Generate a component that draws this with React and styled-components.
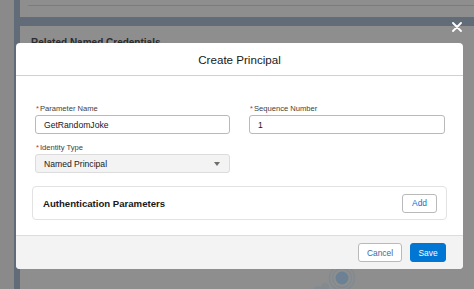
import React from "react";
import styled, { createGlobalStyle } from "styled-components";

const Global = createGlobalStyle`
  html, body { margin: 0; padding: 0; }
  body {
    width: 474px; height: 289px; overflow: hidden;
    background: #8b8b8b;
    font-family: "Liberation Sans", Arial, sans-serif;
  }
  #root { width: 474px; height: 289px; }
`;

const Page = styled.div`
  position: relative;
  width: 474px;
  height: 289px;
  display: flex;
  overflow: hidden;
`;

const SideGray = styled.div`
  width: 14px;
  background: #8a8a8a;
`;

const Main = styled.div`
  flex: 1;
  background: #626c79;
  padding-left: 6px;
  display: flex;
  flex-direction: column;
  gap: 9px;
`;

const TopCard = styled.div`
  height: 17px;
  background: #8e8e8e;
  padding: 5px 0 0 8px;
  box-sizing: border-box;
`;

const CardLine = styled.div`
  height: 1px;
  background: #7c7c7c;
`;

const BottomCard = styled.div`
  position: relative;
  flex: 1;
  background: #8e8e8e;
  padding: 11px 0 0 11px;
`;

const CardTitle = styled.div`
  font-size: 10px;
  font-weight: 700;
  color: #2c2c2c;
  line-height: 12px;
`;

const Decoration = styled.svg`
  position: absolute;
  left: 272px;
  top: 237px;
`;

const Close = styled.button`
  position: absolute;
  left: 451px;
  top: 21px;
  width: 12px;
  height: 12px;
  padding: 0;
  border: 0;
  background: transparent;
  display: flex;
  align-items: center;
  justify-content: center;
`;

const Modal = styled.div`
  position: absolute;
  left: 16px;
  top: 43px;
  width: 447px;
  height: 226px;
  background: #fff;
  border-radius: 4px;
  display: flex;
  flex-direction: column;
  overflow: hidden;
`;

const Header = styled.div`
  height: 33px;
  border-bottom: 1px solid #d0d0d0;
  display: flex;
  align-items: center;
  justify-content: center;
  box-sizing: border-box;
`;

const Title = styled.h2`
  margin: 0;
  font-size: 11.6px;
  font-weight: 400;
  color: #181818;
`;

const Body = styled.div`
  flex: 1;
  padding: 28px 16px 0 16px;
  display: flex;
  flex-direction: column;
`;

const Grid = styled.div`
  display: grid;
  grid-template-columns: 195px 196px;
  column-gap: 19px;
  row-gap: 9px;
  padding: 0 3px;
  align-items: start;
`;

const Field = styled.div`
  display: flex;
  flex-direction: column;
  gap: 2px;
`;

const Label = styled.label`
  font-size: 7.6px;
  line-height: 9px;
  color: #3e3e3c;
  padding-left: 1px;
`;

const Req = styled.span`
  color: #c23934;
  margin-right: 1px;
`;

const Input = styled.div`
  height: 19px;
  box-sizing: border-box;
  border: 1px solid ${(p) => (p.$select ? "#dcdcdc" : "#b9b9b9")};
  border-radius: 3px;
  background: ${(p) => (p.$select ? "#f3f3f3" : "#fff")};
  padding: 0 8px 0 8px;
  display: flex;
  align-items: center;
  justify-content: space-between;
  font-size: 8.6px;
  color: #181818;
`;

const Caret = styled.span`
  width: 0;
  height: 0;
  border-left: 3px solid transparent;
  border-right: 3px solid transparent;
  border-top: 4px solid #706e6b;
  margin-right: 1px;
`;

const AuthBox = styled.div`
  margin-top: 13px;
  height: 34px;
  box-sizing: border-box;
  border: 1px solid #e2e2e2;
  border-radius: 4px;
  display: flex;
  align-items: center;
  justify-content: space-between;
  padding: 0 9px 0 10px;
`;

const AuthTitle = styled.div`
  font-size: 9.6px;
  font-weight: 700;
  color: #181818;
`;

const Button = styled.button`
  height: 19px;
  box-sizing: border-box;
  padding: 0;
  width: ${(p) => p.$w}px;
  border-radius: 3px;
  border: 1px solid ${(p) => (p.$brand ? "#0176d3" : "#b9b9b9")};
  background: ${(p) => (p.$brand ? "#0176d3" : "#fff")};
  color: ${(p) => (p.$brand ? "#fff" : p.$muted ? "#3d6a9f" : "#0176d3")};
  font-family: "Liberation Sans", Arial, sans-serif;
  font-size: 8.4px;
  display: flex;
  align-items: center;
  justify-content: center;
`;

const Footer = styled.div`
  height: 34px;
  box-sizing: border-box;
  background: #f3f3f3;
  border-top: 1px solid #dcdcdc;
  display: flex;
  align-items: center;
  justify-content: flex-end;
  gap: 8px;
  padding: 0 17px 0 0;
`;

export default function App() {
  return (
    <>
      <Global />
      <Page>
        <SideGray />
        <Main>
          <TopCard>
            <CardLine />
          </TopCard>
          <BottomCard>
            <CardTitle>Related Named Credentials</CardTitle>
            <Decoration width="80" height="30" viewBox="0 0 80 30">
              <circle cx="50" cy="15" r="12.5" fill="none" stroke="#818a92" strokeWidth="1.5" />
              <circle cx="50" cy="15" r="9.5" fill="none" stroke="#818a92" strokeWidth="1.5" />
              <circle cx="50" cy="15" r="6.5" fill="#6c8294" />
              <circle cx="26" cy="28" r="5" fill="#838b91" />
              <circle cx="33" cy="24" r="4" fill="#838b91" />
            </Decoration>
          </BottomCard>
        </Main>
        <Close aria-label="Close">
          <svg width="10" height="10" viewBox="0 0 10 10">
            <path d="M1 1 L9 9 M9 1 L1 9" stroke="#fff" strokeWidth="1.8" strokeLinecap="round" />
          </svg>
        </Close>
        <Modal>
          <Header>
            <Title>Create Principal</Title>
          </Header>
          <Body>
            <Grid>
              <Field>
                <Label><Req>*</Req>Parameter Name</Label>
                <Input>GetRandomJoke</Input>
              </Field>
              <Field>
                <Label><Req>*</Req>Sequence Number</Label>
                <Input>1</Input>
              </Field>
              <Field>
                <Label><Req>*</Req>Identity Type</Label>
                <Input $select>
                  Named Principal
                  <Caret />
                </Input>
              </Field>
            </Grid>
            <AuthBox>
              <AuthTitle>Authentication Parameters</AuthTitle>
              <Button $w={35}>Add</Button>
            </AuthBox>
          </Body>
          <Footer>
            <Button $w={44} $muted>Cancel</Button>
            <Button $w={36} $brand>Save</Button>
          </Footer>
        </Modal>
      </Page>
    </>
  );
}
